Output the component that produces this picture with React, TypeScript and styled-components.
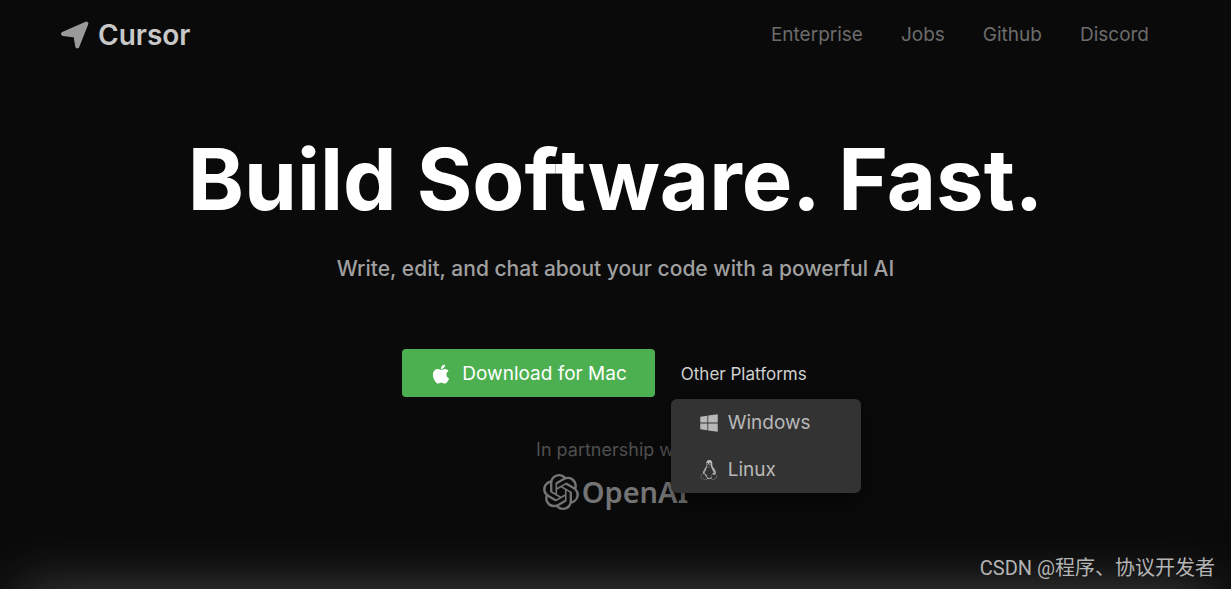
import React from "react";
import styled, { createGlobalStyle } from "styled-components";
import { FaApple, FaLinux, FaWindows } from "react-icons/fa";
import { SiOpenai } from "react-icons/si";

const GlobalStyle = createGlobalStyle`
  *, *::before, *::after { box-sizing: border-box; }
  body {
    margin: 0;
    background: #0a0a0a;
    color: #fff;
    font-family: Inter, "Liberation Sans", sans-serif;
  }
  a { color: inherit; text-decoration: none; }
  h1, p { margin: 0; }
`;

const Page = styled.div`
  position: relative;
  display: flex;
  flex-direction: column;
  min-height: 100vh;
  overflow: hidden;
`;

const Header = styled.header`
  display: flex;
  align-items: center;
  justify-content: space-between;
  height: 70px;
  padding: 0 82px 0 60px;
`;

const Brand = styled.a`
  display: flex;
  align-items: center;
  gap: 9px;
  color: #c8c8c8;
  font-size: 28px;
  font-weight: 600;
  line-height: 36px;
`;

const BrandMark = styled.svg`
  display: block;
  width: 29px;
  height: 28px;
  color: #9a9a9a;
`;

const Nav = styled.nav`
  display: flex;
  gap: 38px;
  color: #6c6c6c;
  font-size: 19px;
  line-height: 28px;
`;

const Hero = styled.main`
  display: flex;
  flex: 1;
  flex-direction: column;
  align-items: center;
  padding-top: 58px;
  text-align: center;
`;

const Title = styled.h1`
  font-size: 85px;
  font-weight: 700;
  line-height: 104px;
  font-variant-ligatures: none;
`;

const Tagline = styled.p`
  margin-top: 22px;
  color: #a0a0a0;
  font-size: 21px;
  font-weight: 500;
  line-height: 30px;
`;

const Actions = styled.div`
  display: flex;
  align-items: center;
  gap: 16px;
  margin-top: 65px;
`;

const DownloadButton = styled.button`
  display: flex;
  align-items: center;
  gap: 10px;
  height: 48px;
  padding: 2px 28px 0;
  border: 0;
  border-radius: 4px;
  background: #4caf50;
  color: #fff;
  font: 400 19px/28px Inter, "Liberation Sans", sans-serif;

  svg { width: 22px; height: 22px; }
`;

const Platforms = styled.div`
  position: relative;
`;

const PlatformsButton = styled.button`
  display: block;
  height: 48px;
  padding: 2px 22px 0 10px;
  border: 0;
  background: none;
  color: #d0d0d0;
  font: 400 17px/24px Inter, "Liberation Sans", sans-serif;
`;

const Menu = styled.div`
  position: absolute;
  top: 100%;
  left: 0;
  z-index: 1;
  display: flex;
  flex-direction: column;
  width: 190px;
  margin-top: 2px;
  border-radius: 6px;
  background: #333;
  box-shadow: 0 8px 16px rgba(0, 0, 0, 0.4);
`;

const MenuItem = styled.a`
  display: flex;
  align-items: center;
  gap: 9px;
  height: 47px;
  padding: 0 28px;
  color: #b8b8b8;
  font-size: 19px;
  line-height: 28px;

  svg { width: 20px; height: 20px; }
`;

const Partner = styled.div`
  display: flex;
  flex-direction: column;
  align-items: center;
  margin-top: 39px;
  color: #4f4f4f;
  font-size: 18px;
  line-height: 28px;
`;

const PartnerLogo = styled.div`
  display: flex;
  align-items: center;
  gap: 3px;
  margin-top: 10px;
  color: #747474;
  font: 600 29px/36px "Noto Sans", sans-serif;

  svg { width: 36px; height: 36px; }
`;

const Glow = styled.div`
  position: absolute;
  right: 20px;
  bottom: -80px;
  left: 20px;
  height: 80px;
  box-shadow: 0 0 56px #444;
`;

const Credit = styled.footer`
  position: relative;
  align-self: flex-end;
  padding: 0 16px 6px 0;
  color: #b4b4b4;
  font: 20px/30px Roboto, "Noto Sans CJK SC", sans-serif;
`;

const links = ["Enterprise", "Jobs", "Github", "Discord"];

export default function App() {
  return (
    <Page>
      <GlobalStyle />
      <Header>
        <Brand href="#">
          <BrandMark viewBox="0 0 29 28" aria-hidden="true">
            <path
              d="M26.4 2.6 L3 12.9 L15.4 14.6 L17.3 25.4Z"
              fill="currentColor"
              stroke="currentColor"
              strokeWidth="4"
              strokeLinejoin="round"
            />
          </BrandMark>
          Cursor
        </Brand>
        <Nav>
          {links.map((link) => (
            <a key={link} href={`#${link.toLowerCase()}`}>{link}</a>
          ))}
        </Nav>
      </Header>
      <Hero>
        <Title>Build Software. Fast.</Title>
        <Tagline>Write, edit, and chat about your code with a powerful AI</Tagline>
        <Actions>
          <DownloadButton type="button">
            <FaApple aria-hidden="true" />
            Download for Mac
          </DownloadButton>
          <Platforms>
            <PlatformsButton type="button" aria-expanded="true">Other Platforms</PlatformsButton>
            <Menu>
              <MenuItem href="#windows"><FaWindows aria-hidden="true" />Windows</MenuItem>
              <MenuItem href="#linux"><FaLinux aria-hidden="true" />Linux</MenuItem>
            </Menu>
          </Platforms>
        </Actions>
        <Partner>
          <p>In partnership with</p>
          <PartnerLogo><SiOpenai aria-hidden="true" />OpenAI</PartnerLogo>
        </Partner>
      </Hero>
      <Glow />
      <Credit>CSDN @程序、协议开发者</Credit>
    </Page>
  );
}
